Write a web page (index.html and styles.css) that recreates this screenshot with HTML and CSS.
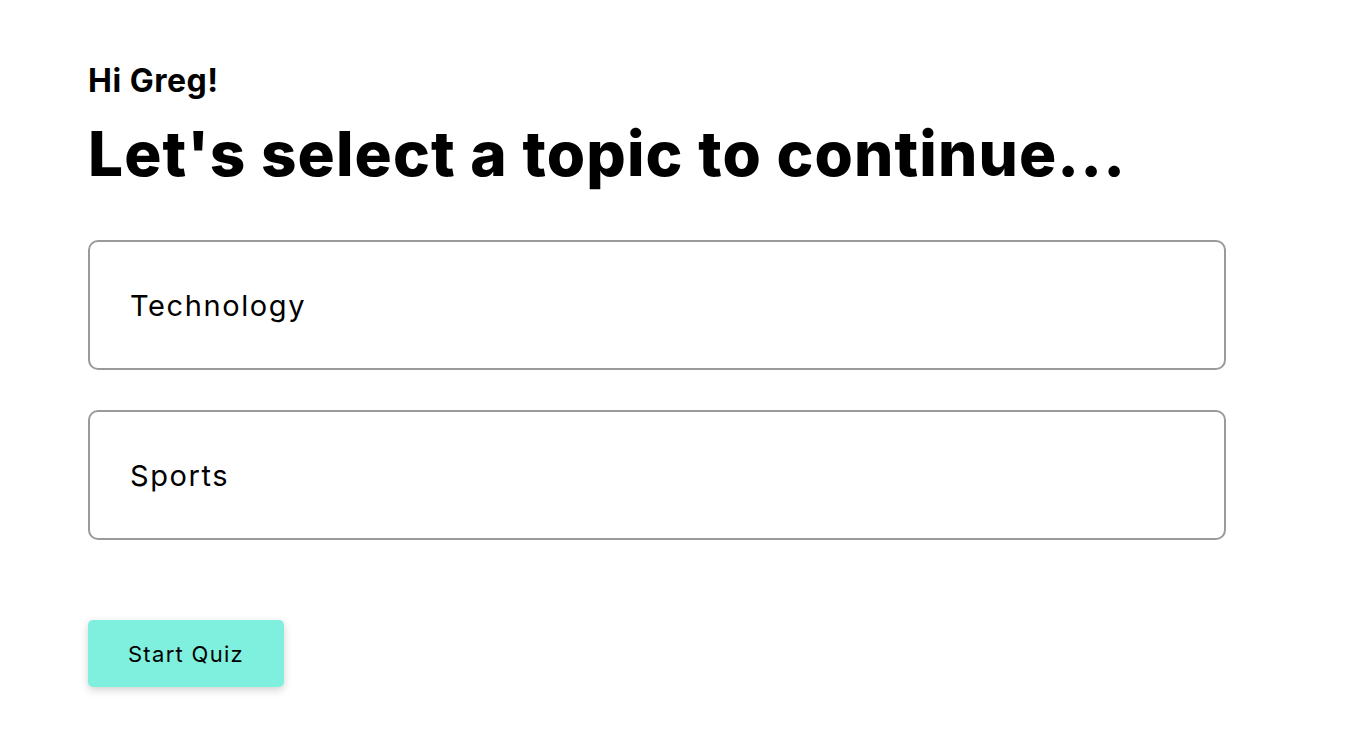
FILE: index.html
```html
<!DOCTYPE html>
<html lang="en">
<head>
    <meta charset="UTF-8">
    <meta name="viewport" content="width=device-width, initial-scale=1.0">
    <title>Quiz</title>
    <link rel="stylesheet" href="styles.css">
</head>
<body>
    <div class="quiz-page">
        <h2 class="greeting">Hi Greg!</h2>
        <h1 class="title">Let's select a topic to continue...</h1>
        <div class="topics">
            <div class="topic-card">Technology</div>
            <div class="topic-card">Sports</div>
        </div>
        <button class="start-btn">Start Quiz</button>
    </div>
</body>
</html>
```

FILE: styles.css
```css
body {
    margin: 0;
    font-family: Inter, "Noto Sans", sans-serif;
    background: #fff;
    color: #000;
}
.quiz-page {
    padding: 62px 88px 40px;
    width: 1138px;
}
.greeting {
    font-size: 32px;
    font-weight: 700;
    margin: 0;
    line-height: 38px;
    letter-spacing: 0.5px;
}
.title {
    font-size: 62px;
    font-weight: 800;
    margin: 16px 0 0;
    line-height: 76px;
    letter-spacing: 1.1px;
}
.topics {
    display: flex;
    flex-direction: column;
    gap: 40px;
    margin-top: 48px;
}
.topic-card {
    border: 2px solid #9a9a9a;
    border-radius: 10px;
    height: 126px;
    display: flex;
    align-items: center;
    padding: 0 40px;
    font-size: 29px;
    letter-spacing: 1.6px;
}
.start-btn {
    margin-top: 80px;
    width: 196px;
    height: 67px;
    background: #7ff0dd;
    border: none;
    border-radius: 5px;
    box-shadow: 0 3px 8px rgba(0, 0, 0, 0.18);
    font-family: inherit;
    font-size: 22px;
    letter-spacing: 1.3px;
    color: #000;
    cursor: pointer;
}
```
